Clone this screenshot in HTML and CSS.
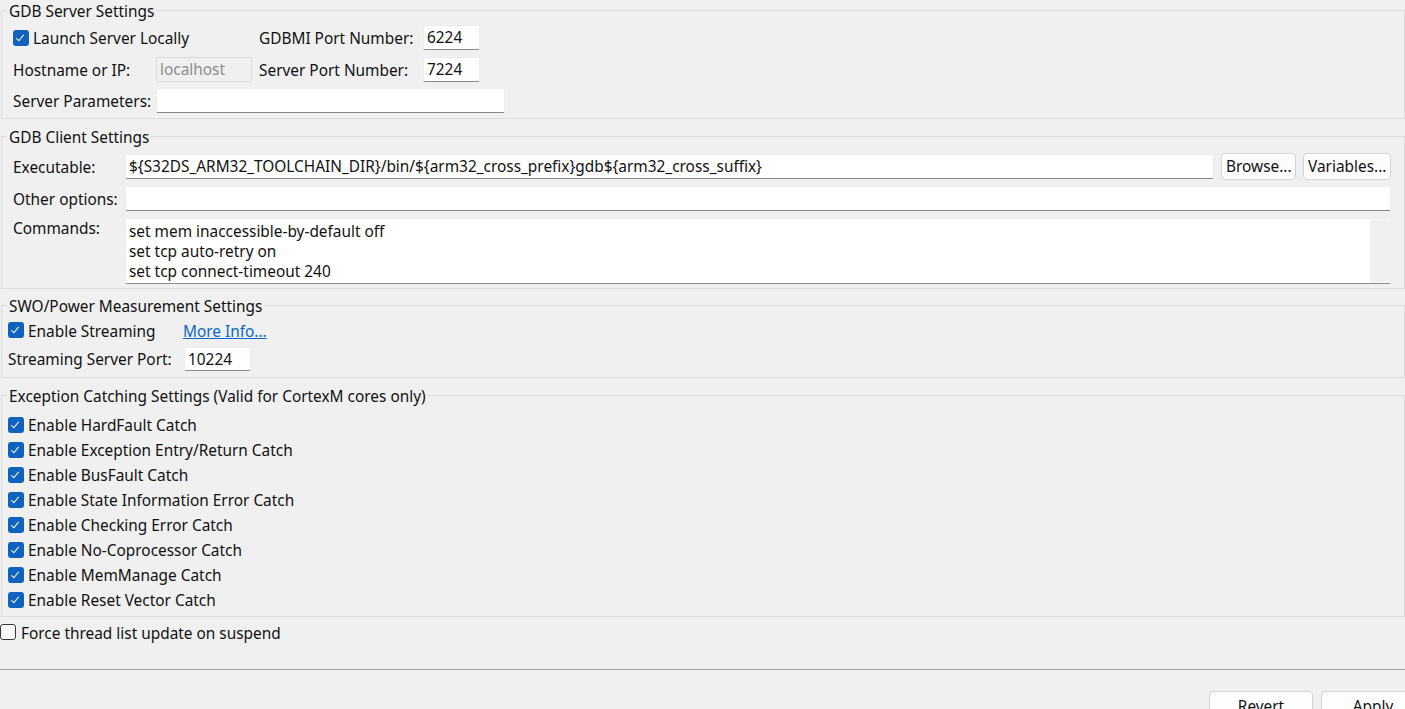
FILE: index.html
```html
<!DOCTYPE html>
<html>
<head>
<meta charset="utf-8">
<link rel="stylesheet" href="styles.css">
</head>
<body>
<div class="page">
  <fieldset class="group">
    <legend>GDB Server Settings</legend>
    <div class="inner server-grid">
      <label class="check span2"><span class="box on"></span><span class="t">Launch Server Locally</span></label>
      <span class="lbl pad-l">GDBMI Port Number:</span>
      <div class="field port">6224</div>

      <span class="lbl">Hostname or IP:</span>
      <div class="field disabled">localhost</div>
      <span class="lbl pad-l">Server Port Number:</span>
      <div class="field port">7224</div>

      <span class="lbl">Server Parameters:</span>
      <div class="field params"></div>
    </div>
  </fieldset>

  <fieldset class="group g-client">
    <legend>GDB Client Settings</legend>
    <div class="inner client-grid">
      <span class="lbl">Executable:</span>
      <div class="exec-row">
        <div class="field grow">${S32DS_ARM32_TOOLCHAIN_DIR}/bin/${arm32_cross_prefix}gdb${arm32_cross_suffix}</div>
        <button class="btn browse">Browse...</button>
        <button class="btn vars">Variables...</button>
      </div>
      <span class="lbl">Other options:</span>
      <div class="field"></div>
      <span class="lbl top">Commands:</span>
      <div class="field area">
        <div class="lines">
          <div>set mem inaccessible-by-default off</div>
          <div>set tcp auto-retry on</div>
          <div>set tcp connect-timeout 240</div>
        </div>
        <div class="scroll"></div>
      </div>
    </div>
  </fieldset>

  <fieldset class="group g-swo">
    <legend>SWO/Power Measurement Settings</legend>
    <div class="inner swo">
      <div class="swo-row1">
        <label class="check"><span class="box on"></span><span class="t">Enable Streaming</span></label>
        <a class="link" href="#">More Info...</a>
      </div>
      <div class="swo-row2">
        <span class="lbl">Streaming Server Port:</span>
        <div class="field sport">10224</div>
      </div>
    </div>
  </fieldset>

  <fieldset class="group g-exc">
    <legend>Exception Catching Settings (Valid for CortexM cores only)</legend>
    <div class="inner checklist">
      <label class="check"><span class="box on"></span><span class="t">Enable HardFault Catch</span></label>
      <label class="check"><span class="box on"></span><span class="t">Enable Exception Entry/Return Catch</span></label>
      <label class="check"><span class="box on"></span><span class="t">Enable BusFault Catch</span></label>
      <label class="check"><span class="box on"></span><span class="t">Enable State Information Error Catch</span></label>
      <label class="check"><span class="box on"></span><span class="t">Enable Checking Error Catch</span></label>
      <label class="check"><span class="box on"></span><span class="t">Enable No-Coprocessor Catch</span></label>
      <label class="check"><span class="box on"></span><span class="t">Enable MemManage Catch</span></label>
      <label class="check"><span class="box on"></span><span class="t">Enable Reset Vector Catch</span></label>
    </div>
  </fieldset>

  <label class="check force"><span class="box off"></span><span class="t">Force thread list update on suspend</span></label>

  <div class="separator"></div>

  <div class="buttons">
    <button class="btn big">Revert</button>
    <button class="btn big">Apply</button>
  </div>
</div>
</body>
</html>
```

FILE: styles.css
```css
html, body {
  margin: 0;
  padding: 0;
  background: #f0f0f0;
  overflow: hidden;
  width: 1405px;
  height: 709px;
}
body {
  font-family: "Noto Sans", "Open Sans", sans-serif;
  font-size: 15.4px;
  color: #111;
}
.page {
  display: flex;
  flex-direction: column;
}
.group {
  margin: 0 0 0 1px;
  padding: 0;
  border: 1px solid #dcdcdc;
  min-width: 0;
}
.group legend {
  box-sizing: border-box;
  margin-left: 5px;
  padding: 3px 2px 0 2px;
  line-height: 17px;
  height: 20px;
  color: #111;
}
.lbl {
  box-sizing: border-box;
  padding-top: 2px;
  line-height: 23px;
  white-space: nowrap;
}
.lbl.top {
  padding-top: 1px;
  line-height: 20px;
}
.pad-l { padding-left: 7px; }
.field {
  box-sizing: border-box;
  height: 25px;
  background: #fff;
  border: 1px solid #ececec;
  border-bottom-color: #8a8a8a;
  border-radius: 2px;
  line-height: 22px;
  padding: 1px 3px 0 3px;
  white-space: nowrap;
  overflow: hidden;
}
.field.disabled {
  background: #f0f0f0;
  border: 1px solid #dadada;
  color: #8c8c8c;
}

/* checkbox */
.check {
  display: flex;
  align-items: center;
  gap: 4px;
  white-space: nowrap;
}
.check .t {
  padding-top: 2px;
}
.box {
  box-sizing: border-box;
  width: 16px;
  height: 16px;
  border-radius: 3px;
  flex: none;
  position: relative;
}
.box.on {
  background: #0f62c0;
}
.box.on::after {
  content: "";
  position: absolute;
  left: 5px;
  top: 3px;
  width: 3px;
  height: 7px;
  border-right: 1.3px solid #fff;
  border-bottom: 1.3px solid #fff;
  transform: rotate(40deg);
}
.box.off {
  background: #fbfbfb;
  border: 1px solid #3a3a3a;
}

/* server */
.server-grid {
  padding: 5px 12px 5px 11px;
  display: grid;
  grid-template-columns: 143px 96px 171px 57px;
  grid-template-rows: 25px 25px 25px;
  row-gap: 6.5px;
  align-items: center;
}
.span2 { grid-column: 1 / 3; }
.params {
  grid-column: 2 / 5;
  width: 349px;
}

/* client */
.g-client {
  margin-top: 7px;
}
.client-grid {
  padding: 8px 13px 4px 11px;
  display: grid;
  grid-template-columns: 112px 1fr;
  grid-template-rows: 25px 25px 66px;
  row-gap: 7px;
}
.exec-row {
  display: flex;
  gap: 7px;
  align-items: center;
}
.grow { flex: 1; }
.btn {
  box-sizing: border-box;
  height: 27px;
  background: #fdfdfd;
  border: 1px solid #d3d3d3;
  border-radius: 4px;
  font-family: inherit;
  font-size: 15.4px;
  color: #111;
  padding: 1px 4px 0 4px;
  line-height: 24px;
}
.browse { width: 75px; }
.vars { width: 88px; }
.area {
  height: 66px;
  display: flex;
  padding: 0 0 0 3px;
  line-height: 20px;
}
.area .lines {
  flex: 1;
  padding-top: 3px;
}
.area .scroll {
  width: 20px;
  margin: 1px 0 1px 0;
  background: #f0f0f0;
}

/* swo */
.g-swo {
  margin-top: 6px;
}
.swo {
  padding: 5px 12px 6px 6px;
}
.swo-row1 {
  display: flex;
  align-items: center;
  height: 20px;
}
.swo-row1 .check { width: 175px; }
.link {
  color: #0a66c8;
  text-decoration: underline;
  padding-top: 2px;
}
.swo-row2 {
  display: flex;
  align-items: center;
  margin-top: 6px;
}
.swo-row2 .lbl { width: 176px; }
.sport {
  width: 67px;
  height: 24px;
  line-height: 21px;
}

/* exceptions */
.g-exc {
  margin-top: 7px;
}
.checklist {
  padding: 7px 12px 4px 6px;
  display: flex;
  flex-direction: column;
}
.checklist .check {
  height: 25px;
}

.force {
  margin-top: 5px;
  height: 20px;
}
.force .box { margin-right: 1px; }

.separator {
  margin-top: 27px;
  height: 1px;
  background: #a0a0a0;
}
.buttons {
  display: flex;
  justify-content: flex-end;
  gap: 8px;
  margin-top: 21px;
  margin-right: -20px;
}
.btn.big {
  width: 104px;
  height: 30px;
}
```
